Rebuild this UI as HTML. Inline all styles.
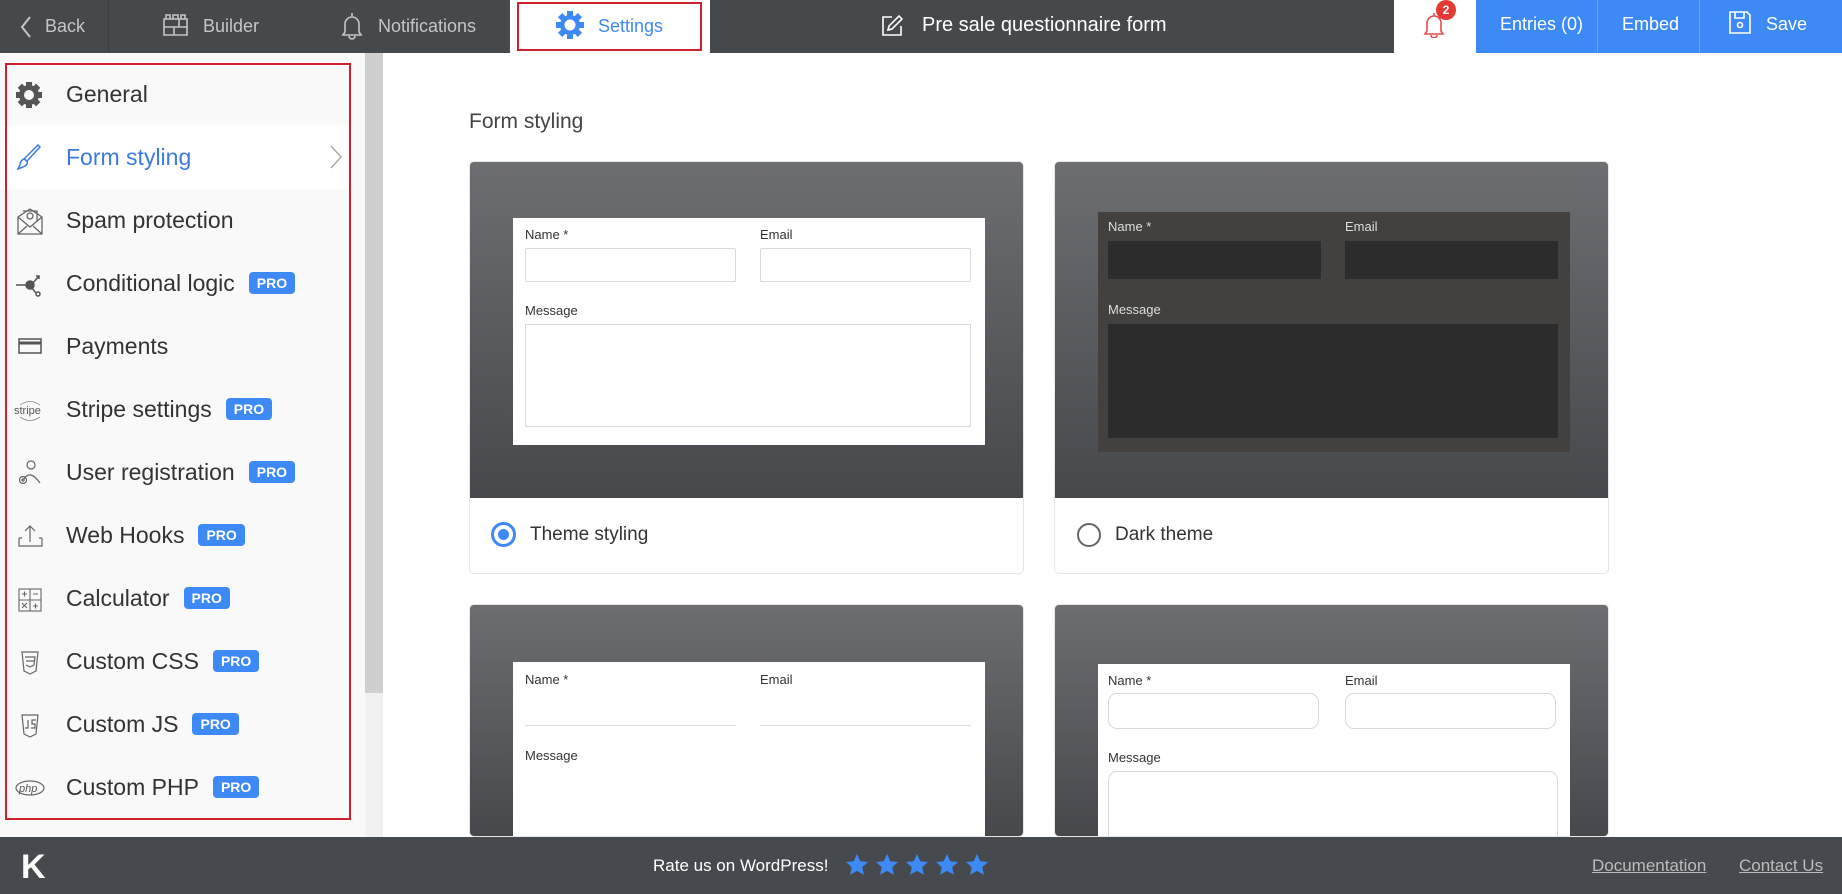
<!DOCTYPE html>
<html><head><meta charset="utf-8"><style>
*{margin:0;padding:0;box-sizing:border-box}
html,body{width:1842px;height:894px;overflow:hidden}
body{background:#fff;font-family:"Liberation Sans",sans-serif;position:relative}
.a{position:absolute}
.top{left:0;top:0;width:1842px;height:53px;background:#46494c}
.tt{color:#c3c6c9;font-size:18px;top:16px}
.side{left:0;top:53px;width:365px;height:784px;background:#f9f9f9}
.item{position:absolute;left:0;width:350px;height:63px}
.item .ic{position:absolute;left:14px;top:18px;width:32px;height:28px}
.item .tx{position:absolute;left:66px;top:18px;font-size:23px;color:#333;white-space:nowrap}
.pro{display:inline-block;background:#3d8af7;color:#fff;font-weight:bold;font-size:14px;padding:3px 8px;border-radius:4px;margin-left:14px;vertical-align:3px}
.card{position:absolute;background:#fff;border:1px solid #e6e6e6;border-radius:5px;overflow:hidden}
.prev{position:absolute;left:0;top:0;right:0;height:336px;background:linear-gradient(#6d6e71,#46484b)}
.card.b .prev{height:100%}
.lbl{position:absolute;font-size:13px;color:#333}
.fld{position:absolute;border:1px solid #d9d9d9;background:#fff}
.foot{left:0;top:837px;width:1842px;height:57px;background:#464a4e;z-index:5}
</style></head><body>
<div class="a top"></div>
<div class="a" style="left:108px;top:0;width:1px;height:53px;background:#3b3e41"></div>
<svg class="a" style="left:18px;top:15px" width="16" height="24"><path d="M12 2L4 12l8 10" stroke="#c3c6c9" stroke-width="2" fill="none"/></svg>
<div class="a tt" style="left:45px">Back</div>
<svg class="a" style="left:162px;top:13px" width="27" height="24" fill="none" stroke="#c3c6c9" stroke-width="1.6"><path d="M2 6h23v16H2zM2 14h23M12 14v8M17 6v8M4 6V2h4v4M11 6V2h5v4M19 6V2h4v4"/></svg>
<div class="a tt" style="left:203px">Builder</div>
<svg class="a" style="left:340px;top:10px" width="24" height="30" fill="none" stroke="#c3c6c9" stroke-width="1.6"><path d="M12 3v3M5 22V14a7 7 0 0 1 14 0v8l2 3H3zM9 26a3 3 0 0 0 6 0"/></svg>
<div class="a tt" style="left:378px">Notifications</div>
<div class="a" style="left:510px;top:0;width:200px;height:53px;background:#fff"></div>
<div class="a" style="left:517px;top:2px;width:185px;height:49px;border:2px solid #d0202e"></div>
<svg class="a" style="left:555px;top:10px" width="30" height="30" viewBox="0 0 30 30"><g fill="#3d8af7"><circle cx="15" cy="15" r="10"/><rect x="12" y="1" width="6" height="28"/><rect x="1" y="12" width="28" height="6"/><rect x="12" y="1" width="6" height="28" transform="rotate(45 15 15)"/><rect x="12" y="1" width="6" height="28" transform="rotate(-45 15 15)"/></g><circle cx="15" cy="15" r="5.5" fill="#fff"/></svg>
<div class="a tt" style="left:598px;color:#3d8af7">Settings</div>
<svg class="a" style="left:880px;top:14px" width="24" height="24" fill="none" stroke="#fff" stroke-width="1.6"><path d="M12 3H3v18h18v-9M8 16l1-4L19 2l3 3-10 10z"/></svg>
<div class="a" style="left:922px;top:14px;font-size:20px;color:#fff">Pre sale questionnaire form</div>
<div class="a" style="left:1394px;top:0;width:82px;height:53px;background:#fff"></div>
<svg class="a" style="left:1423px;top:10px" width="22" height="28" fill="none" stroke="#e74c4c" stroke-width="1.6"><path d="M11 3v3M4 21V13a7 7 0 0 1 14 0v8l2 3H2zM8 25a3 3 0 0 0 6 0"/></svg>
<div class="a" style="left:1436px;top:0;width:20px;height:20px;border-radius:10px;background:#e53935;color:#fff;font-size:12px;font-weight:bold;text-align:center;line-height:20px">2</div>
<div class="a" style="left:1476px;top:0;width:366px;height:53px;background:#3d8af7"></div>
<div class="a" style="left:1597px;top:0;width:1px;height:53px;background:#6aa6f9"></div>
<div class="a" style="left:1699px;top:0;width:1px;height:53px;background:#6aa6f9"></div>
<div class="a" style="left:1500px;top:14px;font-size:18px;color:#fff">Entries (0)</div>
<div class="a" style="left:1622px;top:14px;font-size:18px;color:#fff">Embed</div>
<svg class="a" style="left:1728px;top:10px" width="24" height="25" fill="none" stroke="#fff" stroke-width="1.6"><path d="M2 2h17l3 3v18H2zM7 2v6h9V2"/><circle cx="12" cy="15" r="2.5"/></svg>
<div class="a" style="left:1766px;top:14px;font-size:18px;color:#fff">Save</div>

<div class="a side"></div>
<div class="a" style="left:365px;top:53px;width:18px;height:640px;background:#cfcfcf"></div>
<div class="a" style="left:365px;top:693px;width:18px;height:144px;background:#f1f1f1"></div>
<div class="a" style="left:0;top:125px;width:350px;height:64px;background:#fff"></div>

<div class="item" style="top:63px"><svg class="ic" viewBox="0 0 32 28"><g fill="#555"><circle cx="15" cy="14" r="10"/><rect x="12" y="1" width="6" height="26"/><rect x="2" y="11" width="26" height="6"/><rect x="12" y="1" width="6" height="26" transform="rotate(45 15 14)"/><rect x="12" y="1" width="6" height="26" transform="rotate(-45 15 14)"/></g><circle cx="15" cy="14" r="5" fill="#f9f9f9"/></svg><div class="tx">General</div></div>
<div class="item" style="top:126px"><svg class="ic" viewBox="0 0 32 28" fill="none" stroke="#3d7be0" stroke-width="1.5"><path d="M26 3L13 17l-3-2L24 1zM10 15c-3 1-4 4-4 6l-2 4 5-2c3-1 5-3 4-6"/></svg><div class="tx" style="color:#3d7be0">Form styling</div><svg style="position:absolute;left:329px;top:18px" width="14" height="26"><path d="M2 2l10 11L2 24" stroke="#aaa" stroke-width="1.5" fill="none"/></svg></div>
<div class="item" style="top:189px"><svg class="ic" viewBox="0 0 32 28" fill="none" stroke="#666" stroke-width="1.3"><path d="M4 10v17h24V10L16 2zM4 27l9-8M28 27l-9-8M4 10l12 10 12-10M9 4h14v11"/><circle cx="16" cy="9" r="3"/></svg><div class="tx">Spam protection</div></div>
<div class="item" style="top:252px"><svg class="ic" viewBox="0 0 32 28" fill="none" stroke="#555" stroke-width="1.5"><path d="M2 15h10M19 13l6-7M22 6h3v3M18 18l4 5"/><circle cx="16" cy="15" r="4" fill="#555"/><circle cx="24" cy="24" r="2"/></svg><div class="tx">Conditional logic<span class="pro">PRO</span></div></div>
<div class="item" style="top:315px"><svg class="ic" viewBox="0 0 32 28" fill="none" stroke="#555" stroke-width="1.5"><rect x="5" y="6" width="22" height="14"/><path d="M5 10h22" stroke-width="3"/></svg><div class="tx">Payments</div></div>
<div class="item" style="top:378px"><svg class="ic" viewBox="0 0 32 28"><text x="0" y="18" font-size="11" fill="#555" font-family="Liberation Sans">stripe</text><path d="M6 9q10-7 20 0M6 21q10 7 20 0" stroke="#888" fill="none" stroke-width=".8"/></svg><div class="tx">Stripe settings<span class="pro">PRO</span></div></div>
<div class="item" style="top:441px"><svg class="ic" viewBox="0 0 32 28" fill="none" stroke="#666" stroke-width="1.2"><circle cx="17" cy="6" r="4"/><path d="M10 20q6-10 16 4"/><circle cx="9" cy="21" r="3.5"/><path d="M7 21h4M9 19v4"/></svg><div class="tx">User registration<span class="pro">PRO</span></div></div>
<div class="item" style="top:504px"><svg class="ic" viewBox="0 0 32 28" fill="none" stroke="#666" stroke-width="1.2"><path d="M5 16v8h23v-8M16 20V4M11 9l5-5 5 5M5 16h3M25 16h3"/></svg><div class="tx">Web Hooks<span class="pro">PRO</span></div></div>
<div class="item" style="top:567px"><svg class="ic" viewBox="0 0 32 28" fill="none" stroke="#666" stroke-width="1.1"><rect x="5" y="4" width="22" height="22"/><path d="M16 4v22M5 15h22M8 9h5M10.5 6.5v5M19 9h5M8 18l5 5M13 18l-5 5M19 21h5M21.5 18.5v5"/></svg><div class="tx">Calculator<span class="pro">PRO</span></div></div>
<div class="item" style="top:630px"><svg class="ic" viewBox="0 0 32 28" fill="none" stroke="#666" stroke-width="1.2"><path d="M8 4h16l-2 19-6 3-6-3zM11 9h10l-1 8-4 2-4-2M12 13h8"/></svg><div class="tx">Custom CSS<span class="pro">PRO</span></div></div>
<div class="item" style="top:693px"><svg class="ic" viewBox="0 0 32 28" fill="none" stroke="#666" stroke-width="1.2"><path d="M8 4h16l-2 19-6 3-6-3zM14 9v8h-3M22 9h-4v4h3v4h-4"/></svg><div class="tx">Custom JS<span class="pro">PRO</span></div></div>
<div class="item" style="top:756px"><svg class="ic" viewBox="0 0 32 28"><ellipse cx="16" cy="14" rx="14" ry="7" fill="none" stroke="#666" stroke-width="1.2"/><text x="5" y="18" font-size="11" font-style="italic" fill="#555" font-family="Liberation Sans">php</text></svg><div class="tx">Custom PHP<span class="pro">PRO</span></div></div>
<div class="a" style="left:5px;top:63px;width:346px;height:757px;border:2px solid #d0202e"></div>

<div class="a" style="left:469px;top:110px;font-size:21px;color:#444">Form styling</div>

<div class="card" style="left:469px;top:161px;width:555px;height:413px">
<div class="prev"></div>
<div class="a" style="left:43px;top:56px;width:472px;height:227px;background:#fff"></div>
<div class="lbl" style="left:55px;top:65px">Name *</div><div class="lbl" style="left:290px;top:65px">Email</div>
<div class="fld" style="left:55px;top:86px;width:211px;height:34px;border-radius:2px"></div>
<div class="fld" style="left:290px;top:86px;width:211px;height:34px;border-radius:2px"></div>
<div class="lbl" style="left:55px;top:141px">Message</div>
<div class="fld" style="left:55px;top:162px;width:446px;height:103px"></div>
<div class="a" style="left:21px;top:360px;width:25px;height:25px;border-radius:13px;border:3px solid #3d8af7"><div style="margin:4px;width:11px;height:11px;border-radius:6px;background:#3d8af7"></div></div>
<div class="a" style="left:60px;top:362px;font-size:19px;color:#333">Theme styling</div>
</div>

<div class="card" style="left:1054px;top:161px;width:555px;height:413px">
<div class="prev"></div>
<div class="a" style="left:43px;top:50px;width:472px;height:240px;background:#42413f"></div>
<div class="lbl" style="left:53px;top:57px;color:#ddd">Name *</div><div class="lbl" style="left:290px;top:57px;color:#ddd">Email</div>
<div class="a" style="left:53px;top:79px;width:213px;height:38px;background:#2c2c2c"></div>
<div class="a" style="left:290px;top:79px;width:213px;height:38px;background:#2c2c2c"></div>
<div class="lbl" style="left:53px;top:140px;color:#ddd">Message</div>
<div class="a" style="left:53px;top:162px;width:450px;height:114px;background:#2c2c2c"></div>
<div class="a" style="left:22px;top:361px;width:24px;height:24px;border-radius:12px;border:2px solid #666"></div>
<div class="a" style="left:60px;top:362px;font-size:19px;color:#333">Dark theme</div>
</div>

<div class="card b" style="left:469px;top:604px;width:555px;height:233px">
<div class="prev"></div>
<div class="a" style="left:43px;top:57px;width:472px;height:176px;background:#fff"></div>
<div class="lbl" style="left:55px;top:67px">Name *</div><div class="lbl" style="left:290px;top:67px">Email</div>
<div class="a" style="left:55px;top:120px;width:211px;height:1px;background:#ddd"></div>
<div class="a" style="left:290px;top:120px;width:211px;height:1px;background:#ddd"></div>
<div class="lbl" style="left:55px;top:143px">Message</div>
</div>

<div class="card b" style="left:1054px;top:604px;width:555px;height:233px">
<div class="prev"></div>
<div class="a" style="left:43px;top:59px;width:472px;height:174px;background:#fff"></div>
<div class="lbl" style="left:53px;top:68px">Name *</div><div class="lbl" style="left:290px;top:68px">Email</div>
<div class="fld" style="left:53px;top:88px;width:211px;height:36px;border-radius:9px"></div>
<div class="fld" style="left:290px;top:88px;width:211px;height:36px;border-radius:9px"></div>
<div class="lbl" style="left:53px;top:145px">Message</div>
<div class="fld" style="left:53px;top:166px;width:450px;height:67px;border-radius:9px 9px 0 0;border-bottom:none"></div>
</div>

<div class="a foot"></div>
<div class="a" style="left:21px;top:850px;font-size:34px;font-weight:bold;color:#fff;line-height:34px;z-index:6">K</div>
<div class="a" style="left:653px;top:856px;font-size:17px;color:#fff;z-index:6">Rate us on WordPress!</div>
<svg class="a" style="left:845px;top:853px;z-index:6" width="146" height="26" fill="#3d8af7"><defs><path id="s" d="M12 1l3.3 7.2 7.7.8-5.8 5.2 1.7 7.6L12 17.9 5.1 21.8l1.7-7.6L1 9l7.7-.8z"/></defs><use href="#s"/><use href="#s" x="30"/><use href="#s" x="60"/><use href="#s" x="90"/><use href="#s" x="120"/></svg>
<div class="a" style="left:1592px;top:856px;font-size:17px;color:#bbb;text-decoration:underline;z-index:6">Documentation</div>
<div class="a" style="left:1739px;top:856px;font-size:17px;color:#bbb;text-decoration:underline;z-index:6">Contact Us</div>
</body></html>
